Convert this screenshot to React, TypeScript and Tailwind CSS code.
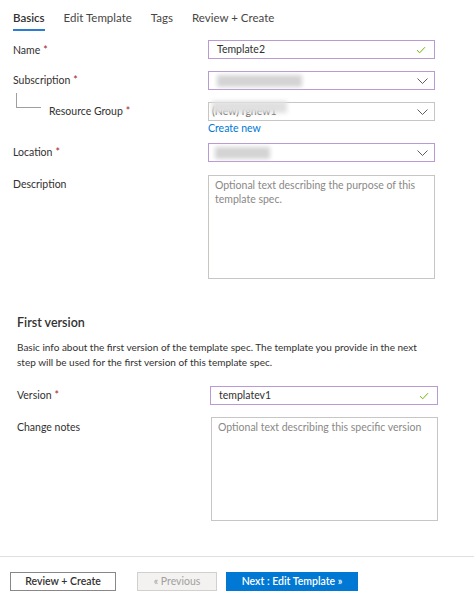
import React from "react";

const font = { fontFamily: "Lato, 'Open Sans', sans-serif" };

function Req() {
  return <span className="ml-[3px] text-[#a4262c]">*</span>;
}

function Check() {
  return (
    <svg width="10" height="8" viewBox="0 0 10 8" className="shrink-0">
      <path d="M1 4.2 L3.7 6.8 L9 1.2" fill="none" stroke="#6bb700" strokeWidth="1" />
    </svg>
  );
}

function Chevron() {
  return (
    <svg width="11" height="6" viewBox="0 0 11 6" className="shrink-0">
      <path d="M0.5 0.5 L5.5 5.5 L10.5 0.5" fill="none" stroke="#605e5c" strokeWidth="1" />
    </svg>
  );
}

function Blur({ w }: { w: string }) {
  return <div className={`h-[12px] ${w} bg-[#d4d4d4] blur-[2px]`} />;
}

function TextBox({ value, className = "" }: { value: string; className?: string }) {
  return (
    <div
      className={`flex h-[19px] items-center justify-between border border-[#b99ad3] pl-[8px] pr-[8px] text-[10.5px] text-[#323130] ${className}`}
    >
      <span>{value}</span>
      <Check />
    </div>
  );
}

function Select({ children, purple }: { children: React.ReactNode; purple?: boolean }) {
  return (
    <div
      className={`flex h-[19px] items-center justify-between border pl-[3px] pr-[6px] ${
        purple ? "border-[#b99ad3]" : "border-[#c8c6c4]"
      }`}
    >
      {children}
      <Chevron />
    </div>
  );
}

function Area({ text, h }: { text: string; h: string }) {
  return (
    <div
      className={`${h} border border-[#c8c6c4] px-[6px] pt-[2px] text-[10.5px] leading-[14px] text-[#8a8886]`}
    >
      {text}
    </div>
  );
}

export default function App() {
  return (
    <div className="flex h-[601px] w-[474px] flex-col bg-white text-[#323130]" style={font}>
      {/* tabs */}
      <div className="flex h-[31px] gap-[19px] pl-[13px] text-[11.5px]">
        <div className="flex flex-col justify-between pt-[9px]">
          <span className="font-semibold">Basics</span>
          <div className="h-[2px] bg-[#2b7cd3]" />
        </div>
        <span className="pt-[9px] text-[#484644]">Edit Template</span>
        <span className="pt-[9px] text-[#484644]">Tags</span>
        <span className="pt-[9px] text-[#484644]">Review + Create</span>
      </div>

      <div className="flex flex-col pl-[13px] pr-[39px] text-[10.5px]">
        {/* name */}
        <div className="mt-[9px] flex items-center">
          <div className="w-[195px] pt-[2px]">
            Name<Req />
          </div>
          <TextBox value="Template2" className="flex-1" />
        </div>

        {/* subscription */}
        <div className="mt-[12px] flex items-center">
          <div className="w-[195px] pt-[1px]">
            Subscription<Req />
          </div>
          <div className="flex-1">
            <Select purple>
              <div className="ml-[5px]">
                <Blur w="w-[85px]" />
              </div>
            </Select>
          </div>
        </div>

        {/* resource group */}
        <div className="mt-[12px] flex">
          <div className="flex w-[195px]">
            <div className="ml-[3px] h-[15px] w-[25px] -translate-y-[9px] border-b border-l border-[#a19f9d]" />
            <span className="ml-[8px] mt-[2px]">
              Resource Group<Req />
            </span>
          </div>
          <div className="flex flex-1 flex-col">
            <Select>
              <div className="relative">
                <span className="text-[10.5px] text-[#605e5c]">(New) rgnew1</span>
                <div className="absolute -top-[3px] left-0 h-[12px] w-[75px] bg-[#e0e0e0] blur-[2px]" />
              </div>
            </Select>
            <a className="mt-0 text-[10.5px] leading-[14px] text-[#0078d4]">Create new</a>
          </div>
        </div>

        {/* location */}
        <div className="mt-[8px] flex items-center">
          <div className="w-[195px] pt-[1px]">
            Location<Req />
          </div>
          <div className="flex-1">
            <Select purple>
              <div className="ml-[3px]">
                <Blur w="w-[55px]" />
              </div>
            </Select>
          </div>
        </div>

        {/* description */}
        <div className="mt-[13px] flex">
          <div className="w-[195px] pt-[2px]">Description</div>
          <div className="flex-1">
            <Area h="h-[104px]" text="Optional text describing the purpose of this template spec." />
          </div>
        </div>
      </div>

      {/* first version */}
      <div className="flex flex-col pl-[17px] pr-[36px]">
        <h2 className="mt-[36px] text-[12.5px] font-semibold leading-[16px]">First version</h2>
        <p className="mt-[9px] text-[10px] leading-[15px]">
          Basic info about the first version of the template spec. The template you provide in the next step will be used
          for the first version of this template spec.
        </p>

        <div className="mt-[16px] flex items-center text-[10.5px]">
          <div className="w-[193px] pt-[1px]">
            Version<Req />
          </div>
          <TextBox value="templatev1" className="flex-1" />
        </div>

        <div className="mt-[12px] flex text-[10.5px]">
          <div className="w-[194px] pt-[3px]">Change notes</div>
          <div className="flex-1">
            <Area h="h-[104px]" text="Optional text describing this specific version" />
          </div>
        </div>
      </div>

      {/* footer */}
      <div className="mt-auto border-t border-[#e1dfdd]">
        <div className="flex gap-[20px] px-[10px] pb-[10px] pt-[15px] text-[10.5px]">
          <button className="h-[19px] w-[106px] border border-[#8a8886] font-semibold text-[#323130]">
            Review + Create
          </button>
          <div className="ml-[1px] flex gap-[9px]">
            <button className="h-[19px] w-[80px] border border-[#d2d0ce] bg-[#f3f2f1] text-[#a19f9d]">
              « Previous
            </button>
            <button className="h-[19px] w-[132px] bg-[#0078d4] font-semibold text-white">
              Next : Edit Template »
            </button>
          </div>
        </div>
      </div>
    </div>
  );
}
